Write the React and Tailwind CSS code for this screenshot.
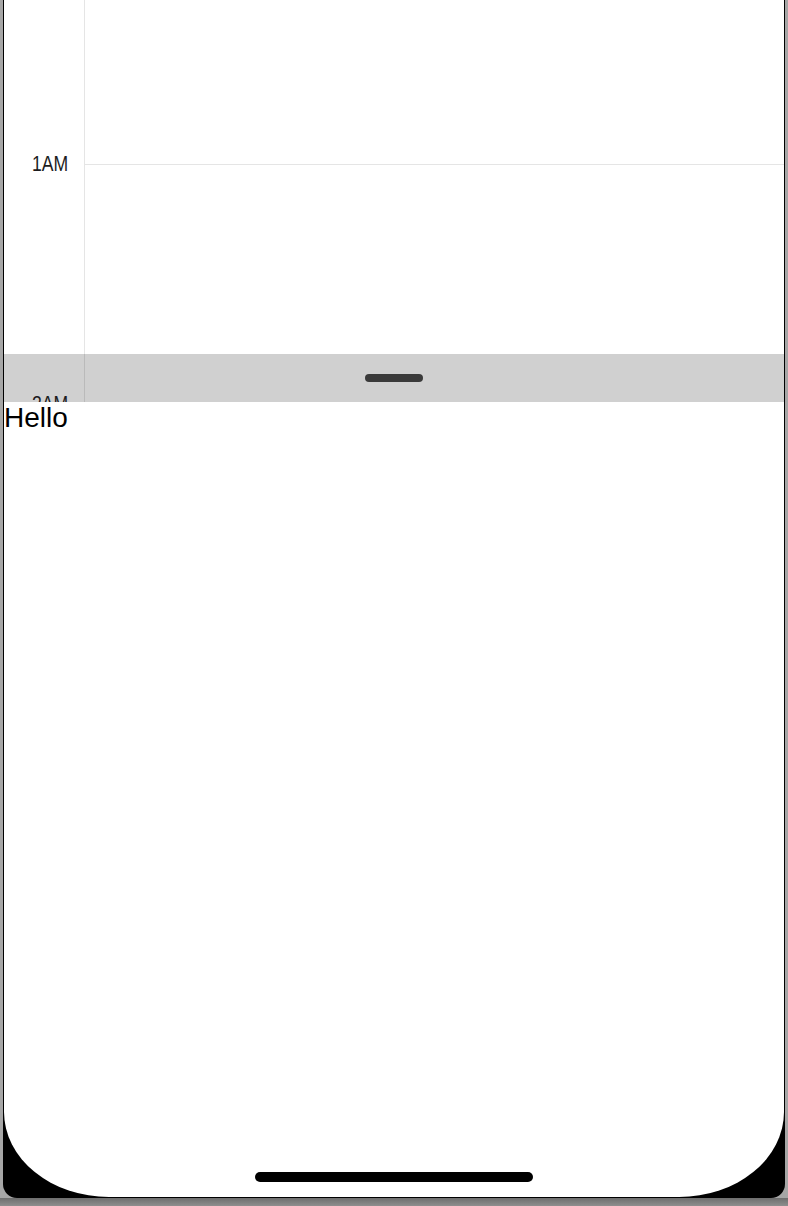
import React from 'react';

const lineColor = 'border-black/10';

const HourRow = ({ label }) => (
    <div className="flex h-[240px] shrink-0">
        <div className={`w-[81px] shrink-0 border-r ${lineColor} pr-[16px] text-right`}>
            <div className="-mt-[13px] h-[26px] text-[22px] leading-[26px] text-[#1c1c1e]">
                <span className="inline-block origin-right scale-x-[0.8]">{label}</span>
            </div>
        </div>
        <div className={`flex-1 border-t ${lineColor}`}></div>
    </div>
);

const App = () => {
    return (
        <div
            className="w-[788px] h-[1206px] overflow-hidden bg-[#a6a6a6] px-[3px]"
            style={{ fontFamily: '"Liberation Sans", Arial, sans-serif' }}
        >
            <div className="h-[1198px] bg-black rounded-b-[14px] px-[1px] pb-[1px]">
                <div className="relative h-full bg-white rounded-bl-[105px_85px] rounded-br-[105px_85px] overflow-hidden flex flex-col">
                    {/* calendar */}
                    <div className="relative h-[402px] shrink-0 overflow-hidden">
                        <div className="absolute left-0 right-0 bottom-0 h-[48px] bg-[#d0d0d0]"></div>
                        <div className="relative flex flex-col">
                            <div className="flex h-[164px] shrink-0">
                                <div className={`w-[81px] shrink-0 border-r ${lineColor}`}></div>
                                <div className="flex-1"></div>
                            </div>
                            <HourRow label="1AM" />
                            <HourRow label="2AM" />
                        </div>
                        <div className="absolute left-0 right-0 bottom-0 h-[48px] flex items-center justify-center">
                            <div className="w-[58px] h-[8px] rounded-full bg-[#3a3a3a]"></div>
                        </div>
                    </div>

                    <div className="text-[28px] leading-[32px] text-black">Hello</div>

                    <div className="absolute bottom-[15px] left-1/2 -translate-x-1/2 w-[278px] h-[10px] rounded-full bg-black"></div>
                </div>
            </div>
            <div className="h-[8px] -mx-[3px] bg-gradient-to-b from-[#6e6e6e] to-[#8e8e8e]"></div>
        </div>
    );
};

export default App;
